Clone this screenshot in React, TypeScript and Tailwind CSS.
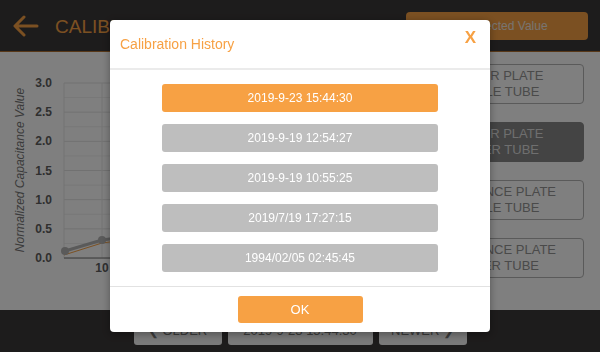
import React from "react";

const HISTORY = [
  "2019-9-23 15:44:30",
  "2019-9-19 12:54:27",
  "2019-9-19 10:55:25",
  "2019/7/19 17:27:15",
  "1994/02/05 02:45:45",
];

const SIDE_BUTTONS = [
  { top: "SENSOR PLATE", bottom: "SAMPLE TUBE", active: false },
  { top: "SENSOR PLATE", bottom: "BUFFER TUBE", active: true },
  { top: "REFERENCE PLATE", bottom: "SAMPLE TUBE", active: false },
  { top: "REFERENCE PLATE", bottom: "BUFFER TUBE", active: false },
];

const Y_TICKS = ["3.0", "2.5", "2.0", "1.5", "1.0", "0.5", "0.0"];

const Chart = () => {
  const top = 31;
  const step = 29.17;
  return (
    <svg width="400" height="258" className="block">
      {/* grid */}
      {Array.from({ length: 13 }).map((_, i) => (
        <line
          key={`h${i}`}
          x1="64"
          x2="400"
          y1={top + (i * step) / 2}
          y2={top + (i * step) / 2}
          stroke={i % 2 === 0 ? "#e2e2e2" : "#efefef"}
          strokeWidth="1"
        />
      ))}
      {Array.from({ length: 9 }).map((_, i) => (
        <line key={`v${i}`} x1={64 + i * 38} x2={64 + i * 38} y1={top} y2={top + 6 * step} stroke="#e6e6e6" />
      ))}
      <line x1="64" x2="400" y1={top + 6 * step} y2={top + 6 * step} stroke="#777" strokeWidth="1" />
      {Y_TICKS.map((t, i) => (
        <text
          key={t}
          x="52"
          y={top + i * step + 4}
          textAnchor="end"
          fontSize="12"
          fontWeight="bold"
          fill="#5e5e5e"
          fontFamily="Liberation Sans, Arial, sans-serif"
        >
          {t}
        </text>
      ))}
      <text
        x="102"
        y="220"
        textAnchor="middle"
        fontSize="12"
        fontWeight="bold"
        fill="#5e5e5e"
        fontFamily="Liberation Sans, Arial, sans-serif"
      >
        10
      </text>
      <text
        transform="translate(24 118) rotate(-90)"
        textAnchor="middle"
        fontSize="12"
        fontStyle="italic"
        fill="#767676"
        fontFamily="Liberation Sans, Arial, sans-serif"
      >
        Normalized Capacitance Value
      </text>
      {/* data */}
      <polyline points="64,203 102,191 140,186 178,180" fill="none" stroke="#f7a144" strokeWidth="1" />
      <polyline points="65,199 102,188 140,183 178,178" fill="none" stroke="#b4b4b4" strokeWidth="3" />
      <circle cx="65" cy="199" r="4" fill="#b4b4b4" />
      <circle cx="102" cy="188" r="4" fill="#b4b4b4" />
      <circle cx="140" cy="183" r="4" fill="#b4b4b4" />
    </svg>
  );
};

const HistoryModal = () => (
  <div className="fixed inset-0 bg-black/50 flex items-center justify-center">
    <div className="w-[380px] h-[312px] bg-white rounded-[4px] shadow-[0_2px_8px_rgba(0,0,0,0.35)] flex flex-col">
      {/* header */}
      <div className="relative h-[48px] flex items-center pl-[10px]">
        <span className="text-[14px] text-[#f7a144]">Calibration History</span>
        <span className="absolute top-[5px] right-[14px] text-[17px] font-bold text-[#f7a144]">X</span>
      </div>
      <div className="h-[2px] bg-[#ebebeb]" />

      {/* list */}
      <div className="flex flex-col items-center gap-[12px] py-[14px]">
        {HISTORY.map((h, i) => (
          <button
            key={h}
            className={`w-[276px] h-[28px] rounded-[3px] text-[12px] text-white ${
              i === 0 ? "bg-[#f7a144]" : "bg-[#bebebe]"
            }`}
          >
            {h}
          </button>
        ))}
      </div>
      <div className="h-px bg-[#e2e2e2]" />

      {/* footer */}
      <div className="flex justify-center pt-[9px]">
        <button className="w-[125px] h-[27px] rounded-[3px] bg-[#f7a144] text-white text-[13px]">OK</button>
      </div>
    </div>
  </div>
);

export default function App() {
  return (
    <div className="relative w-[600px] h-[352px] flex flex-col overflow-hidden font-['Liberation_Sans',Arial,sans-serif]">
      {/* top bar */}
      <div className="h-[52px] shrink-0 bg-[#3b3838] border-b border-[#b07030] flex items-center pl-[13px] pr-[12px]">
        <svg width="26" height="22" viewBox="0 0 26 22" fill="none" stroke="#f7a144" strokeWidth="3" strokeLinecap="round" strokeLinejoin="round">
          <path d="M24 11H3M11 2L2 11l9 9" />
        </svg>
        <span className="ml-[16px] pt-[3px] text-[19px] text-[#f7a144]">CALIBRATION</span>
        <button className="ml-auto w-[182px] h-[28px] rounded-[4px] bg-[#f7a144] pr-[18px] text-[12px] text-[#f0e8e0]">
          Show Corrected Value
        </button>
      </div>

      {/* body */}
      <div className="flex-1 bg-white flex">
        <div className="flex-1">
          <Chart />
        </div>
        <div className="w-[180px] mr-[16px] pt-[12px] flex flex-col gap-[18px]">
          {SIDE_BUTTONS.map((b, i) => (
            <button
              key={i}
              className={`h-[40px] rounded-[4px] border text-[13px] leading-[16px] ${
                b.active
                  ? "bg-[#888888] border-[#888888] text-[#dedede]"
                  : "bg-white border-[#b4b4b4] text-[#949494]"
              }`}
            >
              {b.top}
              <br />
              {b.bottom}
            </button>
          ))}
        </div>
      </div>

      {/* bottom bar */}
      <div className="h-[42px] shrink-0 bg-[#3b3838] flex justify-center gap-[6px] pt-[6px]">
        <button className="w-[88px] h-[29px] rounded-[3px] bg-[#f4f4f4] text-[13px] text-[#777]">❮ OLDER</button>
        <button className="w-[145px] h-[29px] rounded-[3px] bg-[#f4f4f4] text-[13px] text-[#777]">2019-9-23 15:44:30</button>
        <button className="w-[88px] h-[29px] rounded-[3px] bg-[#f4f4f4] text-[13px] text-[#777]">NEWER ❯</button>
      </div>

      <HistoryModal />
    </div>
  );
}
